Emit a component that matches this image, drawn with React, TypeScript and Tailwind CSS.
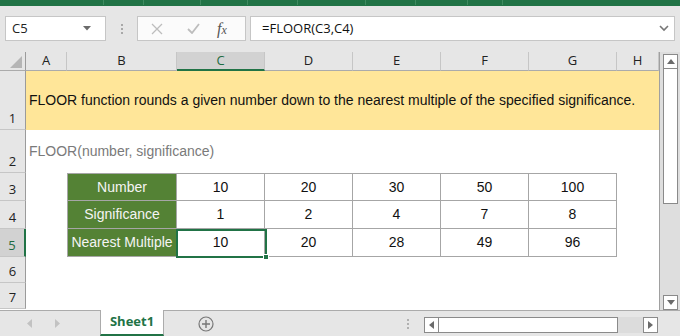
import React from "react";

const cols = [
  { k: "A", w: 41 },
  { k: "B", w: 110 },
  { k: "C", w: 88 },
  { k: "D", w: 88 },
  { k: "E", w: 88 },
  { k: "F", w: 88 },
  { k: "G", w: 88 },
  { k: "H", w: 42 },
];

const tableRows = [
  { n: 3, h: 28, label: "Number", vals: ["10", "20", "30", "50", "100"] },
  { n: 4, h: 28, label: "Significance", vals: ["1", "2", "4", "7", "8"] },
  { n: 5, h: 28, label: "Nearest Multiple", vals: ["10", "20", "28", "49", "96"] },
];

const cellFont = "font-['Liberation_Sans',Arial,sans-serif] text-[14px]";
const uiFont = "font-['Open_Sans','Noto_Sans',sans-serif]";

function RowHeader({ n, h, active }: { n: number; h: number; active?: boolean }) {
  return (
    <div
      className={`w-[26px] shrink-0 flex items-end justify-center border-b border-[#c6c6c6] ${uiFont} text-[13px] leading-[20px] ${
        active
          ? "bg-[#d2d2d2] border-r-2 border-r-[#217346] text-[#1e6b41]"
          : "bg-[#e6e6e6] border-r border-r-[#9b9b9b] text-[#222]"
      }`}
      style={{ height: h }}
    >
      <span className="pb-[1px]">{n}</span>
    </div>
  );
}

export default function App() {
  const greenLines = [103, 143, 200, 247, 297, 365, 415, 467, 502];
  return (
    <div className="w-[680px] h-[336px] overflow-hidden bg-[#e6e6e6] flex flex-col">
      {/* top green strip */}
      <div className="relative h-[6px] shrink-0 bg-[#217346]">
        {greenLines.map((x) => (
          <div key={x} className="absolute top-0 h-[5px] w-px bg-[#3f8a60]" style={{ left: x }} />
        ))}
      </div>

      {/* formula bar */}
      <div className="h-[46px] shrink-0 flex items-start pt-[10px]">
        <div className={`ml-[5px] w-[101px] h-[25px] bg-white border border-[#c6c6c6] flex items-center justify-between pl-[6px] pr-[14px] ${uiFont} text-[13px] text-[#222]`}>
          <span>C5</span>
          <svg width="8" height="5" viewBox="0 0 8 5">
            <path d="M0 0 L8 0 L4 4.5 Z" fill="#6b6b6b" />
          </svg>
        </div>
        <div className="w-[31px] h-[25px] flex flex-col items-center justify-center gap-[2px]">
          <div className="w-[2px] h-[2px] bg-[#a8a8a8]" />
          <div className="w-[2px] h-[2px] bg-[#a8a8a8]" />
          <div className="w-[2px] h-[2px] bg-[#a8a8a8]" />
        </div>
        <div className="w-[109px] h-[25px] bg-[#fbfbfb] border border-[#c6c6c6] flex items-center">
          <svg className="ml-[13px]" width="12" height="12" viewBox="0 0 12 12">
            <path d="M1 1 L11 11 M11 1 L1 11" stroke="#bdbdbd" strokeWidth="1.3" fill="none" />
          </svg>
          <svg className="ml-[24px]" width="13" height="11" viewBox="0 0 13 11">
            <path d="M1 6 L5 10 L12 1" stroke="#bdbdbd" strokeWidth="1.8" fill="none" />
          </svg>
          <span className="ml-[17px] font-['Liberation_Serif',serif] italic text-[16px] text-[#555] leading-none">
            f<span className="text-[12px]">x</span>
          </span>
        </div>
        <div className={`ml-[4px] w-[425px] h-[25px] bg-white border border-[#c6c6c6] flex items-center justify-between pl-[11px] pr-[5px] ${uiFont} text-[13px] text-[#111]`}>
          <span>=FLOOR(C3,C4)</span>
          <svg width="10" height="7" viewBox="0 0 10 7">
            <path d="M1 1 L5 5 L9 1" stroke="#777" strokeWidth="1.6" fill="none" />
          </svg>
        </div>
      </div>

      {/* grid + vertical scrollbar */}
      <div className="flex h-[258px] shrink-0">
        <div className="relative w-[659px] h-[258px] bg-white overflow-hidden">
          {/* column headers */}
          <div className="flex h-[19px]">
            <div className="relative w-[26px] shrink-0 bg-[#e6e6e6] border-r border-r-[#9b9b9b] border-b border-b-[#ababab]">
              <svg className="absolute right-[3px] bottom-[2px]" width="12" height="12" viewBox="0 0 12 12">
                <path d="M12 0 L12 12 L0 12 Z" fill="#b5b5b5" />
              </svg>
            </div>
            {cols.map((c) => (
              <div
                key={c.k}
                className={`shrink-0 flex items-center justify-center border-r border-r-[#c6c6c6] ${uiFont} text-[13px] ${
                  c.k === "C"
                    ? "bg-[#d2d2d2] border-b-2 border-b-[#217346] text-[#1e6b41]"
                    : "bg-[#e6e6e6] border-b border-b-[#ababab] text-[#222]"
                }`}
                style={{ width: c.w }}
              >
                {c.k}
              </div>
            ))}
          </div>

          {/* row 1 */}
          <div className="flex">
            <RowHeader n={1} h={59} />
            <div className={`w-[633px] h-[59px] bg-[#ffe699] flex items-center pl-[3px] ${cellFont} text-[#111]`}>
              FLOOR function rounds a given number down to the nearest multiple of the specified significance.
            </div>
          </div>

          {/* row 2 */}
          <div className="flex">
            <RowHeader n={2} h={43} />
            <div className={`w-[633px] h-[43px] flex items-center pl-[3px] ${cellFont} text-[#7a7a7a]`}>
              FLOOR(number, significance)
            </div>
          </div>

          {/* rows 3-5 */}
          {tableRows.map((r, i) => (
            <div key={r.n} className="flex">
              <RowHeader n={r.n} h={r.h} active={r.n === 5} />
              <div className="w-[41px] shrink-0" />
              <div
                className={`w-[110px] shrink-0 bg-[#548235] text-[#f4f4f4] flex items-center justify-center border-l border-r border-b border-[#a6a6a6] ${
                  i === 0 ? "border-t" : ""
                } ${cellFont} whitespace-nowrap`}
                style={{ height: r.h }}
              >
                {r.label}
              </div>
              {r.vals.map((v, j) => (
                <div
                  key={j}
                  className={`w-[88px] shrink-0 flex items-center justify-center border-r border-b border-[#a6a6a6] ${
                    i === 0 ? "border-t" : ""
                  } ${cellFont} text-[#111]`}
                  style={{ height: r.h }}
                >
                  {v}
                </div>
              ))}
            </div>
          ))}

          {/* rows 6-7 */}
          <div className="flex">
            <RowHeader n={6} h={26} />
          </div>
          <div className="flex">
            <RowHeader n={7} h={26} />
          </div>

          {/* selection C5 */}
          <div className="absolute left-[176px] top-[177px] w-[91px] h-[29px] border-2 border-[#217346]">
            <div className="absolute right-[-4px] bottom-[-4px] w-[6px] h-[6px] bg-[#217346] border border-white" />
          </div>
        </div>

        {/* vertical scrollbar */}
        <div className="w-[21px] h-[258px] bg-[#dedede] border-l border-[#a0a0a0] flex flex-col pl-[3px] pt-[2px]">
          <div className="w-[15px] h-[15px] bg-white border border-[#8a8a8a] flex items-center justify-center">
            <svg width="8" height="5" viewBox="0 0 8 5">
              <path d="M0 5 L8 5 L4 0 Z" fill="#6b6b6b" />
            </svg>
          </div>
          <div className="w-[15px] h-[135px] bg-white border border-[#8a8a8a] border-t-0" />
          <div className="flex-1" />
          <div className="w-[15px] h-[15px] mb-[0px] bg-white border border-[#8a8a8a] flex items-center justify-center">
            <svg width="8" height="5" viewBox="0 0 8 5">
              <path d="M0 0 L8 0 L4 5 Z" fill="#6b6b6b" />
            </svg>
          </div>
        </div>
      </div>

      {/* tab bar */}
      <div className="h-[26px] shrink-0 bg-[#e6e6e6] border-t border-[#ababab] flex items-start">
        <div className="w-[100px] h-[25px] flex items-center">
          <svg className="ml-[27px]" width="5" height="9" viewBox="0 0 5 9">
            <path d="M5 0 L5 9 L0 4.5 Z" fill="#c2c2c2" />
          </svg>
          <svg className="ml-[23px]" width="5" height="9" viewBox="0 0 5 9">
            <path d="M0 0 L0 9 L5 4.5 Z" fill="#c2c2c2" />
          </svg>
        </div>
        <div className={`-mt-px w-[64px] h-[26px] bg-white border-l border-r border-[#ababab] border-b-2 border-b-[#217346] flex items-center justify-center ${uiFont} font-bold text-[13px] text-[#217346]`}>
          Sheet1
        </div>
        <div className="ml-[34px] h-[25px] flex items-center">
          <svg width="16" height="16" viewBox="0 0 16 16">
            <circle cx="8" cy="8" r="7" stroke="#777" strokeWidth="1.2" fill="none" />
            <path d="M8 4 V12 M4 8 H12" stroke="#777" strokeWidth="1.4" />
          </svg>
        </div>
        <div className="ml-[193px] h-[25px] flex flex-col items-center justify-center gap-[2px]">
          <div className="w-[2px] h-[2px] bg-[#b0b0b0]" />
          <div className="w-[2px] h-[2px] bg-[#b0b0b0]" />
          <div className="w-[2px] h-[2px] bg-[#b0b0b0]" />
        </div>
        <div className="ml-[15px] mt-[6px] w-[234px] h-[16px] flex bg-[#dcdcdc]">
          <div className="w-[15px] h-[16px] bg-white border border-[#8a8a8a] flex items-center justify-center">
            <svg width="5" height="8" viewBox="0 0 5 8">
              <path d="M5 0 L5 8 L0 4 Z" fill="#6b6b6b" />
            </svg>
          </div>
          <div className="w-[179px] h-[16px] bg-white border border-[#8a8a8a] border-l-0" />
          <div className="flex-1" />
          <div className="w-[15px] h-[16px] bg-white border border-[#8a8a8a] flex items-center justify-center">
            <svg width="5" height="8" viewBox="0 0 5 8">
              <path d="M0 0 L0 8 L5 4 Z" fill="#6b6b6b" />
            </svg>
          </div>
        </div>
      </div>
    </div>
  );
}
